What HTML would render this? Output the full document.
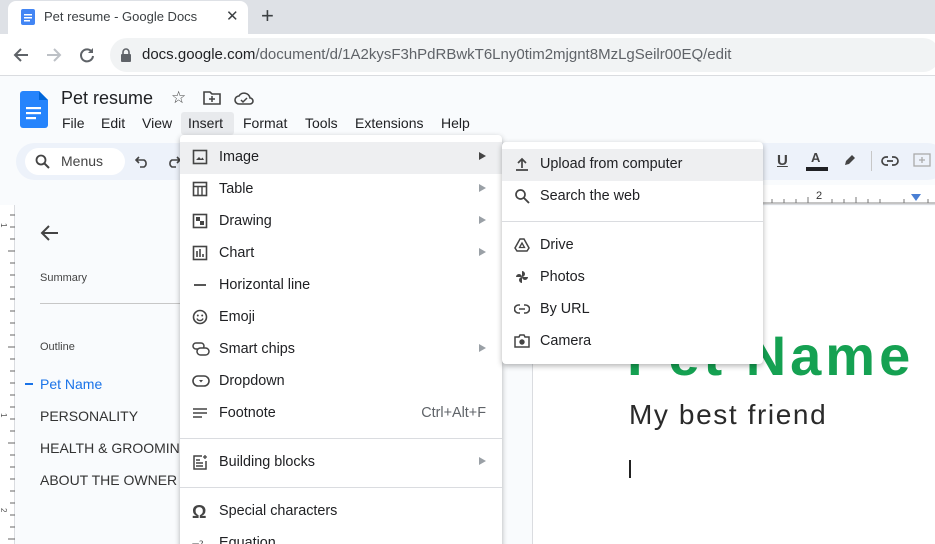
<!DOCTYPE html>
<html style="width:935px;height:544px;overflow:hidden"><head><meta charset="utf-8"><style>
*{margin:0;padding:0;box-sizing:border-box}
body{width:935px;height:544px;overflow:hidden;position:relative;font-family:"Liberation Sans",Arial,sans-serif;background:#f9fbfd;color:#202124}
.a{position:absolute}
.t{position:absolute;white-space:nowrap}
svg{position:absolute}
.mi{position:absolute;left:0;width:100%;height:32px;font-size:14.4px;color:#202124}
.mi span.l{position:absolute;left:39px;top:7px}
.mi .ar{position:absolute;right:16px;top:10px;width:0;height:0;border-left:7px solid #5f6368;border-top:4px solid transparent;border-bottom:4px solid transparent}
.mi svg{left:12px;top:7px}
.sb{position:absolute;left:0;width:100%;height:32px;font-size:14.4px}
.sb span{position:absolute;left:38px;top:7px}
.sb svg{left:12px;top:7px}
</style></head><body>
<div class="a" style="left:0;top:0;width:935px;height:34px;background:#dee1e6"></div>
<div class="a" style="left:8px;top:1px;width:240px;height:34px;background:#fff;border-radius:8px 8px 0 0"></div>
<svg style="left:20px;top:8px" width="16" height="18" viewBox="0 0 16 18"><rect x="1" y="1" width="14" height="16" rx="2" fill="#4285f4"/><rect x="4" y="6" width="8" height="1.5" fill="#fff"/><rect x="4" y="9" width="8" height="1.5" fill="#fff"/><rect x="4" y="12" width="6" height="1.5" fill="#fff"/></svg>
<div class="t" style="left:44px;top:9px;font-size:13px;color:#3c4043">Pet resume - Google Docs</div>
<div class="t" style="left:226px;top:7px;font-size:15px;color:#3c4043">✕</div>
<div class="t" style="left:261px;top:3px;font-size:22px;color:#3c4043">+</div>
<div class="a" style="left:0;top:34px;width:935px;height:42px;background:#fff;border-bottom:1px solid #dadce0"></div>
<svg style="left:12px;top:46px" width="18" height="18" viewBox="0 0 18 18"><path d="M16 9H3M9 3L3 9l6 6" stroke="#5f6368" stroke-width="2" fill="none"/></svg>
<svg style="left:45px;top:46px" width="18" height="18" viewBox="0 0 18 18"><path d="M2 9h13M9 3l6 6-6 6" stroke="#bdc1c6" stroke-width="2" fill="none"/></svg>
<svg style="left:78px;top:46px" width="18" height="18" viewBox="0 0 18 18"><path d="M14 6A6 6 0 1 0 15 10" stroke="#5f6368" stroke-width="2" fill="none"/><path d="M15 2v5h-5z" fill="#5f6368"/></svg>
<div class="a" style="left:110px;top:38px;width:830px;height:34px;background:#f1f3f4;border-radius:17px"></div>
<svg style="left:120px;top:48px" width="12" height="14" viewBox="0 0 12 14"><rect x="1" y="6" width="10" height="8" rx="1" fill="#5f6368"/><path d="M3 6V4a3 3 0 0 1 6 0v2" stroke="#5f6368" stroke-width="1.6" fill="none"/></svg>
<div class="t" style="left:142px;top:46px;font-size:15px;color:#202124">docs.google.com<span style="color:#5f6368">/document/d/1A2kysF3hPdRBwkT6Lny0tim2mjgnt8MzLgSeilr00EQ/edit</span></div>
<svg style="left:20px;top:91px" width="28" height="37" viewBox="0 0 28 37"><path d="M3 0h16l9 9v25a3 3 0 0 1-3 3H3a3 3 0 0 1-3-3V3a3 3 0 0 1 3-3z" fill="#2684fc"/><path d="M19 0v9h9z" fill="#0066da"/><rect x="6" y="16" width="15" height="2.2" fill="#fff"/><rect x="6" y="21" width="15" height="2.2" fill="#fff"/><rect x="6" y="26" width="10" height="2.2" fill="#fff"/></svg>
<div class="t" style="left:61px;top:88px;font-size:18px;color:#202124">Pet resume</div>
<div class="t" style="left:171px;top:88px;font-size:17px;color:#444">☆</div>
<svg style="left:203px;top:91px" width="18" height="14" viewBox="0 0 18 14"><path d="M1 1h6l2 2h8v10H1z" stroke="#444" stroke-width="1.6" fill="none"/><path d="M9 5v6M6 8h6" stroke="#444" stroke-width="1.5"/></svg>
<svg style="left:234px;top:91px" width="20" height="14" viewBox="0 0 20 14"><path d="M5 13a4 4 0 0 1 0-8 6 6 0 0 1 11 2 3 3 0 0 1 0 6z" stroke="#444" stroke-width="1.6" fill="none"/><path d="M7 9l2 2 4-4" stroke="#444" stroke-width="1.5" fill="none"/></svg>
<div class="t" style="left:62px;top:115px;font-size:14px;color:#202124">File</div>
<div class="t" style="left:101px;top:115px;font-size:14px">Edit</div>
<div class="t" style="left:142px;top:115px;font-size:14px">View</div>
<div class="a" style="left:181px;top:112px;width:53px;height:23px;background:#e8eaed;border-radius:3px"></div>
<div class="t" style="left:188px;top:115px;font-size:14px">Insert</div>
<div class="t" style="left:243px;top:115px;font-size:14px">Format</div>
<div class="t" style="left:305px;top:115px;font-size:14px">Tools</div>
<div class="t" style="left:355px;top:115px;font-size:14px">Extensions</div>
<div class="t" style="left:441px;top:115px;font-size:14px">Help</div>
<div class="a" style="left:16px;top:143px;width:930px;height:37px;background:#edf2fa;border-radius:19px"></div>
<div class="a" style="left:25px;top:148px;width:100px;height:27px;background:#fff;border-radius:14px"></div>
<svg style="left:35px;top:154px" width="15" height="15" viewBox="0 0 15 15"><circle cx="6" cy="6" r="4.5" stroke="#444" stroke-width="1.8" fill="none"/><path d="M9.5 9.5L14 14" stroke="#444" stroke-width="2"/></svg>
<div class="t" style="left:61px;top:153px;font-size:14px;color:#444">Menus</div>
<svg style="left:135px;top:156px" width="14" height="12" viewBox="0 0 14 12"><path d="M4 1L1 4l3 3M1 4h8a4 4 0 0 1 0 7H5" stroke="#444" stroke-width="1.6" fill="none"/></svg>
<svg style="left:167px;top:156px" width="14" height="12" viewBox="0 0 14 12"><path d="M10 1l3 3-3 3M13 4H5a4 4 0 0 0 0 7h4" stroke="#444" stroke-width="1.6" fill="none"/></svg>
<div class="t" style="left:777px;top:152px;font-size:15px;color:#444;text-decoration:underline;font-weight:bold">U</div>
<div class="t" style="left:811px;top:150px;font-size:13px;color:#444;font-weight:bold">A</div>
<div class="a" style="left:806px;top:167px;width:22px;height:4px;background:#202124"></div>
<svg style="left:843px;top:153px" width="14" height="14" viewBox="0 0 14 14"><path d="M2 12l1-4 6-6 3 3-6 6z" fill="#444"/></svg>
<div class="a" style="left:871px;top:151px;width:1px;height:20px;background:#c7c7c7"></div>
<svg style="left:881px;top:155px" width="18" height="12" viewBox="0 0 18 12"><path d="M7 2H5a4 4 0 0 0 0 8h2M11 2h2a4 4 0 0 1 0 8h-2M6 6h6" stroke="#444" stroke-width="1.7" fill="none"/></svg>
<svg style="left:913px;top:153px" width="18" height="16" viewBox="0 0 18 16"><rect x="1" y="1" width="16" height="12" stroke="#aaa" stroke-width="1.3" fill="none"/><path d="M9 4v6M6 7h6" stroke="#aaa" stroke-width="1.3"/></svg>
<div class="a" style="left:502px;top:185px;width:433px;height:20px;background:#fff;border-bottom:1px solid #dadce0"></div>
<svg style="left:760px;top:185px" width="175" height="20" viewBox="0 0 175 20"><path d="M0 18H175" stroke="#888" stroke-width="1"/><g stroke="#777" stroke-width="1"><path d="M12 18v-4M24 18v-4M36 18v-4M48 18v-6M72 18v-4M84 18v-4M96 18v-6M108 18v-4M120 18v-4M144 18v-4M168 18v-4"/></g><text x="56" y="14" font-size="11" fill="#333" font-family="Liberation Sans">2</text><path d="M151 9h10l-5 7z" fill="#4a7fd4"/></svg>
<div class="a" style="left:0;top:205px;width:15px;height:339px;background:#fff;border-right:1px solid #dadce0"></div>
<svg style="left:0;top:205px" width="15" height="339" viewBox="0 0 15 339"><g stroke="#666"><path d="M10 10h5M10 22h5M10 34h5M8 46h7M10 58h5M10 70h5M10 82h5M10 94h5M10 106h5M10 118h5M10 130h5M8 142h7M10 154h5M10 166h5M10 178h5M10 190h5M10 202h5M10 214h5M10 226h5M8 238h7M10 250h5M10 262h5M10 274h5M10 286h5M10 298h5M10 310h5M10 322h5M8 334h7"/></g><text x="2" y="25" font-size="8" fill="#555" transform="rotate(90 5 21)">1</text><text x="2" y="215" font-size="8" fill="#555" transform="rotate(90 5 211)">1</text><text x="2" y="310" font-size="8" fill="#555" transform="rotate(90 5 306)">2</text></svg>
<svg style="left:40px;top:224px" width="20" height="18" viewBox="0 0 20 18"><path d="M18 9H3M9 2L2 9l7 7" stroke="#444" stroke-width="2" fill="none"/></svg>
<div class="t" style="left:40px;top:272px;font-size:11px;color:#444">Summary</div>
<div class="a" style="left:40px;top:303px;width:140px;height:1px;background:#c7c7c7"></div>
<div class="t" style="left:40px;top:341px;font-size:11px;color:#444">Outline</div>
<div class="a" style="left:25px;top:383px;width:8px;height:2px;background:#1a73e8"></div>
<div class="t" style="left:40px;top:376px;font-size:14px;color:#1a73e8">Pet Name</div>
<div class="t" style="left:40px;top:408px;font-size:14px;color:#333">PERSONALITY</div>
<div class="t" style="left:40px;top:440px;font-size:14px;color:#333">HEALTH &amp; GROOMING</div>
<div class="t" style="left:40px;top:472px;font-size:14px;color:#333">ABOUT THE OWNER</div>
<div class="a" style="left:532px;top:206px;width:403px;height:338px;background:#fff;border-left:1px solid #dadce0"></div>
<div class="t" style="left:627px;top:323px;font-size:56px;font-weight:bold;color:#15a152;letter-spacing:4px">Pet Name</div>
<div class="t" style="left:629px;top:399px;font-size:28px;color:#2a2a2a;letter-spacing:1.6px">My best friend</div>
<div class="a" style="left:629px;top:460px;width:2px;height:18px;background:#222"></div>
<div class="a" style="left:180px;top:135px;width:322px;height:420px;background:#fff;box-shadow:0 2px 6px rgba(0,0,0,.3);border-radius:4px">
 <div class="mi" style="top:7px;background:#eeeff1"><svg width="16" height="16" viewBox="0 0 16 16"><rect x="1.5" y="1.5" width="13" height="13" stroke="#444" stroke-width="1.6" fill="none"/><path d="M4 11l3-3 2 2 1.5-1.5L12 11z" fill="#444"/></svg><span class="l">Image</span><i class="ar" style="border-left-color:#444"></i></div>
 <div class="mi" style="top:39px"><svg width="16" height="16" viewBox="0 0 16 16"><rect x="1.5" y="1.5" width="13" height="13" stroke="#444" stroke-width="1.6" fill="none"/><path d="M1.5 5.5h13M6 5.5v9M10 5.5v9" stroke="#444" stroke-width="1.4"/></svg><span class="l">Table</span><i class="ar" style="border-left-color:#9aa0a6"></i></div>
 <div class="mi" style="top:71px"><svg width="16" height="16" viewBox="0 0 16 16"><rect x="1.5" y="1.5" width="13" height="13" stroke="#444" stroke-width="1.6" fill="none"/><rect x="4" y="4" width="4" height="4" fill="#444"/><rect x="8" y="8" width="4" height="4" fill="#444"/></svg><span class="l">Drawing</span><i class="ar" style="border-left-color:#9aa0a6"></i></div>
 <div class="mi" style="top:103px"><svg width="16" height="16" viewBox="0 0 16 16"><rect x="1.5" y="1.5" width="13" height="13" stroke="#444" stroke-width="1.6" fill="none"/><path d="M5 12V6M8 12V4M11 12V9" stroke="#444" stroke-width="1.6"/></svg><span class="l">Chart</span><i class="ar" style="border-left-color:#9aa0a6"></i></div>
 <div class="mi" style="top:135px"><svg width="16" height="16" viewBox="0 0 16 16"><path d="M2 8h12" stroke="#444" stroke-width="1.8"/></svg><span class="l">Horizontal line</span></div>
 <div class="mi" style="top:167px"><svg width="16" height="16" viewBox="0 0 16 16"><circle cx="8" cy="8" r="6.5" stroke="#444" stroke-width="1.6" fill="none"/><circle cx="5.8" cy="6.5" r="1" fill="#444"/><circle cx="10.2" cy="6.5" r="1" fill="#444"/><path d="M5 9.5a3.2 3.2 0 0 0 6 0" stroke="#444" stroke-width="1.4" fill="none"/></svg><span class="l">Emoji</span></div>
 <div class="mi" style="top:199px"><svg width="18" height="16" viewBox="0 0 18 16"><rect x="1" y="2" width="11" height="6" rx="3" stroke="#444" stroke-width="1.5" fill="none"/><rect x="5" y="7" width="12" height="7" rx="3.5" stroke="#444" stroke-width="1.5" fill="#fff"/></svg><span class="l">Smart chips</span><i class="ar" style="border-left-color:#9aa0a6"></i></div>
 <div class="mi" style="top:231px"><svg width="18" height="16" viewBox="0 0 18 16"><rect x="1" y="3" width="16" height="10" rx="5" stroke="#444" stroke-width="1.6" fill="none"/><path d="M7 7h4l-2 2.5z" fill="#444"/></svg><span class="l">Dropdown</span></div>
 <div class="mi" style="top:263px"><svg width="16" height="16" viewBox="0 0 16 16"><path d="M1 4h14M1 8h14M1 12h9" stroke="#444" stroke-width="1.5"/></svg><span class="l">Footnote</span><span style="position:absolute;right:16px;top:7px;color:#5f6368">Ctrl+Alt+F</span></div>
 <div class="a" style="left:0;top:303px;width:100%;height:1px;background:#dadce0"></div>
 <div class="mi" style="top:312px"><svg width="16" height="16" viewBox="0 0 16 16"><path d="M10 2H2v13h12V7" stroke="#444" stroke-width="1.5" fill="none"/><path d="M4 6h4M4 9h7M4 12h7" stroke="#444" stroke-width="1.4"/><path d="M13 1v4M11 3h4" stroke="#444" stroke-width="1.3"/></svg><span class="l">Building blocks</span><i class="ar" style="border-left-color:#9aa0a6"></i></div>
 <div class="a" style="left:0;top:352px;width:100%;height:1px;background:#dadce0"></div>
 <div class="mi" style="top:361px"><svg width="16" height="16" viewBox="0 0 16 16"><text x="0" y="15" font-size="18" font-weight="bold" fill="#444" font-family="Liberation Sans">Ω</text></svg><span class="l">Special characters</span></div>
 <div class="mi" style="top:393px"><svg width="16" height="16" viewBox="0 0 16 16"><text x="0" y="15" font-size="14" fill="#444" font-family="Liberation Serif">π²</text></svg><span class="l">Equation</span></div>
</div>
<div class="a" style="left:502px;top:142px;width:261px;height:222px;background:#fff;box-shadow:0 2px 6px rgba(0,0,0,.3);border-radius:4px">
 <div class="sb" style="top:7px;background:#eeeff1"><svg width="16" height="16" viewBox="0 0 16 16"><path d="M8 12V3M4 7l4-4 4 4M2 14h12" stroke="#444" stroke-width="1.7" fill="none"/></svg><span>Upload from computer</span></div>
 <div class="sb" style="top:39px"><svg width="16" height="16" viewBox="0 0 16 16"><circle cx="6.5" cy="6.5" r="4.5" stroke="#444" stroke-width="1.7" fill="none"/><path d="M10 10l5 5" stroke="#444" stroke-width="1.9"/></svg><span>Search the web</span></div>
 <div class="a" style="left:0;top:79px;width:100%;height:1px;background:#dadce0"></div>
 <div class="sb" style="top:88px"><svg width="16" height="16" viewBox="0 0 16 16"><path d="M6 2h4l5 9-2 3H3l-2-3z" stroke="#444" stroke-width="1.5" fill="none"/><path d="M8 6l2.5 4.5h-5z" stroke="#444" stroke-width="1.3" fill="none"/></svg><span>Drive</span></div>
 <div class="sb" style="top:120px"><svg width="16" height="16" viewBox="0 0 16 16"><path d="M8 8V2a3 3 0 0 1 0 6zM8 8h6a3 3 0 0 1-6 0zM8 8v6a3 3 0 0 1 0-6zM8 8H2a3 3 0 0 1 6 0z" fill="#444"/></svg><span>Photos</span></div>
 <div class="sb" style="top:152px"><svg width="16" height="16" viewBox="0 0 16 16"><path d="M6 4H4.5a4 4 0 0 0 0 8H6M10 4h1.5a4 4 0 0 1 0 8H10M5 8h6" stroke="#444" stroke-width="1.6" fill="none"/></svg><span>By URL</span></div>
 <div class="sb" style="top:184px"><svg width="16" height="16" viewBox="0 0 16 16"><path d="M1 4h4l1-2h4l1 2h4v10H1z" stroke="#444" stroke-width="1.5" fill="none"/><circle cx="8" cy="9" r="2.7" fill="#444"/></svg><span>Camera</span></div>
</div>
</body></html>
